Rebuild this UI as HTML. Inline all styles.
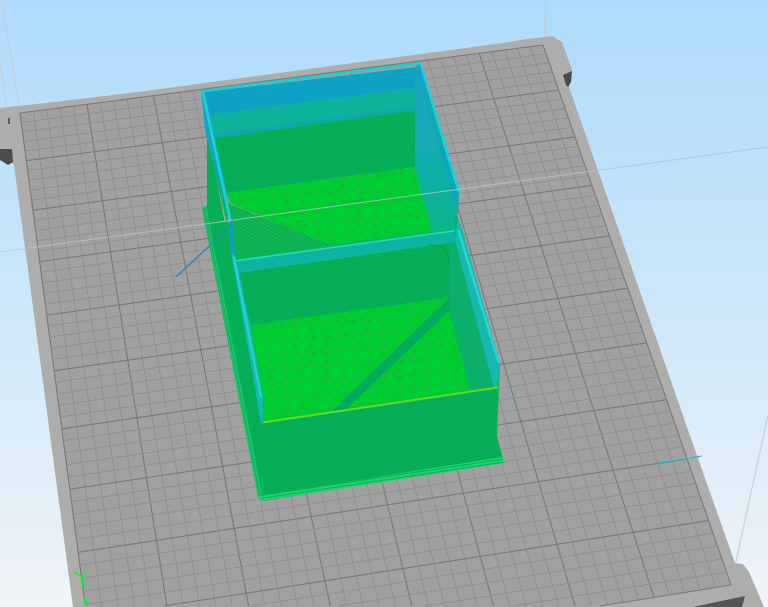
<!DOCTYPE html>
<html>
<head>
<meta charset="utf-8">
<style>
html,body{margin:0;padding:0;background:#c8e4fa;}
body{width:768px;height:607px;overflow:hidden;}
svg{display:block;}
</style>
</head>
<body>
<svg id="s" width="768" height="607" viewBox="0 0 768 607" xmlns="http://www.w3.org/2000/svg">
<defs>
<linearGradient id="bg" x1="0" y1="0" x2="0" y2="1">
<stop offset="0" stop-color="#aedbfc"/>
<stop offset="0.35" stop-color="#c2e3fa"/>
<stop offset="1" stop-color="#f0f4f8"/>
</linearGradient>
<pattern id="floor" width="2" height="2" patternUnits="userSpaceOnUse" patternTransform="rotate(-8)">
<rect width="2" height="2" fill="#02d436"/>
<rect width="1" height="1" fill="#02ad2c"/>
</pattern>
<pattern id="wall" width="2" height="2" patternUnits="userSpaceOnUse" patternTransform="rotate(-8)">
<rect width="2" height="2" fill="#08b45c"/>
<rect width="2" height="1" fill="#04a852"/>
</pattern>
<pattern id="swirl" width="3" height="3" patternUnits="userSpaceOnUse" patternTransform="rotate(30)">
<rect width="3" height="3" fill="#0fba55"/>
<rect width="3" height="1" fill="#07a548"/>
</pattern>
<pattern id="base" width="3" height="3" patternUnits="userSpaceOnUse" patternTransform="rotate(-8.5)">
<rect width="3" height="3" fill="#1bd66c"/>
<rect width="3" height="1" fill="#08ad58"/>
</pattern>
<linearGradient id="rw" x1="0" y1="0" x2="0" y2="1">
<stop offset="0" stop-color="#12a3c6"/>
<stop offset="0.5" stop-color="#12acb2"/>
<stop offset="1" stop-color="#0db488"/>
</linearGradient>
<linearGradient id="lw" x1="0" y1="0" x2="0" y2="1">
<stop offset="0" stop-color="#12a8ca"/>
<stop offset="1" stop-color="#0ba6bc"/>
</linearGradient>
<filter id="soft" x="-5%" y="-5%" width="110%" height="110%"><feGaussianBlur stdDeviation="0.35"/></filter>
</defs>

<rect width="768" height="607" fill="url(#bg)"/>

<!-- bounding lines -->
<g stroke="#c6ccd0" stroke-width="1" fill="none">
<line x1="2" y1="0" x2="19" y2="106"/>
<line x1="0" y1="60" x2="16" y2="170"/>
<line x1="546" y1="0" x2="544" y2="40"/>
<line x1="768" y1="415" x2="733" y2="575"/>
<line x1="600" y1="170" x2="768" y2="147" stroke="#b6c8d2"/>
</g>

<!-- bed -->
<polygon fill="#adadac" points="0,108 45,103 130,93 510,42 520,40 552,36 562,42 572,70 569,87 688,430 735,563 743,564 749,572 764,607 73,607 14,165 0,148"/>
<polygon fill="#4b4b4b" points="0,149 12,149 13,162 8,165 0,160"/>
<polygon fill="#4b4b4b" points="563,75 572,71 571,82 568,87 566,85"/>
<polygon fill="#555555" points="693,607 745,596 742,607"/>
<rect x="8" y="118" width="2" height="6" fill="#5c5c5c"/>
<polygon id="plate" fill="#a1a1a1" points="20,113 543,45 731,585 587,607 86,607"/>
<g id="grid" filter="url(#soft)"></g>

<g filter="url(#soft)">
<!-- model: silhouette and outer faces -->
<polygon fill="#0cb25e" points="202,208 258,497 263,501 500,463 503,458 497,437 500,363 457,215 232,225"/>
<polygon fill="#14c868" points="203,207 208,205 266,495 262,501 258,497"/>
<g stroke="#0aa858" stroke-width="0.8" fill="none">
<line x1="204.5" y1="207" x2="260" y2="497"/>
<line x1="206.5" y1="206" x2="263" y2="497"/>
</g>
<polygon fill="url(#wall)" points="207,130 230,250 262,423 262,495 240,380 207,208"/>

<!-- back box -->
<polygon fill="#0cb25e" points="205,130 233,250 225,200"/>
<polygon fill="url(#lw)" points="201,90 205,92 227,193 237,262 233,250 230,223 205,130"/>
<polygon fill="url(#wall)" points="215,138 415,110 415,167 227,193"/>
<polygon fill="#0eb29a" points="210,115 415,88 415,110 215,138"/>
<polygon fill="#0ea8ae" points="214,134 415,107 415,110 215,138"/>
<polygon fill="#10a2c4" points="205,92 417,67 415,88 210,115"/>
<polygon fill="url(#rw)" points="419,62 459,192 458,213 455,217 455,232 432,232 415,167 415,88 417,67"/>
<polygon fill="#0ba8b8" points="423,90 459,192 458,213 448,180"/>
<polygon fill="url(#floor)" points="227,193 415,167 432,232 328,245 230,203"/>
<polygon fill="url(#swirl)" points="228,203 330,245 237,262"/>
<polygon fill="#1fcfd0" points="201,90 419,62 420,64.5 202,92.5"/>
<polygon fill="#1fd2d4" points="201,90 204,91 232,222 229.5,222"/>
<polygon fill="#1fd2d4" points="419,62 421.5,62.5 460,191 457.5,192"/>
<polygon fill="#0e9ec4" points="229,222 233,220 234,250 231,258"/>

<!-- front box interior -->
<polygon fill="url(#wall)" points="237,262 450,240 450,297 250,325"/>
<polygon fill="#0ab06a" points="450,245 460,235 498,387 470,390 450,312"/>
<polygon fill="url(#floor)" points="250,325 448,298 450,312 470,390 333,412 265,422"/>
<polygon fill="#06aa5c" points="450,297 450,310 343,412 330,413"/>
<polygon fill="#10b4a2" points="235,260 455,230 455,242 238,273"/>
<polygon fill="#26dcb4" points="235,260 455,230 455,231.5 236,261.5"/>
<path d="M426 245 Q448 243 449 262" stroke="#049a50" stroke-width="0.7" fill="none"/>
<polygon fill="#12b8b4" points="231,250 236,258 250,325 263,397 263,422 261,423"/>
<polygon fill="#26d4d8" points="232,254 235,258 262,397 260,397"/>
<polygon fill="#14b8b0" points="458,218 463,232 500,363 497,388 494,388 455,240"/>
<polygon fill="#26d6d0" points="457,230 460,230 500,363 497.5,363"/>

<!-- front wall -->
<polygon fill="url(#wall)" points="262,423 498,388 497,437 502,460 263,495"/>
<polygon fill="#62de14" points="263,421.5 498,386.5 498,388.5 263,423.5"/>
<polygon fill="url(#base)" points="258,496 502,457 505,463 263,501"/>
</g>

<!-- thin lines over model -->
<line x1="0" y1="252" x2="600" y2="170" stroke="#bcc8c4" stroke-width="1" opacity=".75"/>
<line x1="176" y1="277" x2="232" y2="225" stroke="#2786c4" stroke-width="1.4"/>
<line x1="658" y1="464" x2="702" y2="456" stroke="#16b9d0" stroke-width="1.4" stroke-dasharray="3 1"/>

<!-- axes -->
<g stroke="#0af03c" fill="none">
<line x1="82" y1="577" x2="84" y2="587" stroke-width="2.4"/>
<line x1="85" y1="598" x2="86" y2="606" stroke-width="2.4"/>
<line x1="74" y1="572" x2="82" y2="577" stroke-width="1.6"/>
<line x1="88" y1="570" x2="82" y2="577" stroke-width="1.2"/>
</g>
</svg>

<script>
(function(){
  // projective map from unit square onto the plate corners
  var x0=20,y0=113,x1=543,y1=45,x2=731,y2=585,x3=96,y3=687;
  var dx1=x1-x2,dx2=x3-x2,dx3=x0-x1+x2-x3,dy1=y1-y2,dy2=y3-y2,dy3=y0-y1+y2-y3;
  var den=dx1*dy2-dx2*dy1;
  var g=(dx3*dy2-dx2*dy3)/den,h=(dx1*dy3-dx3*dy1)/den;
  var a=x1-x0+g*x1,b=x3-x0+h*x3,c=x0,d=y1-y0+g*y1,e=y3-y0+h*y3,f=y0;
  function P(u,v){var w=g*u+h*v+1;return [(a*u+b*v+c)/w,(d*u+e*v+f)/w];}
  var out=document.getElementById('grid'),NS='http://www.w3.org/2000/svg',Y=606;
  function L(p,q,maj){
    if(p[1]>Y&&q[1]>Y)return;
    if(p[1]>Y||q[1]>Y){
      var t=(Y-p[1])/(q[1]-p[1]),r=[p[0]+t*(q[0]-p[0]),Y];
      if(p[1]>Y)p=r;else q=r;
    }
    var l=document.createElementNS(NS,'line');
    l.setAttribute('x1',p[0]);l.setAttribute('y1',p[1]);
    l.setAttribute('x2',q[0]);l.setAttribute('y2',q[1]);
    l.setAttribute('stroke',maj?'#787878':'#8e8e8e');
    l.setAttribute('stroke-width',maj?'1.1':'0.9');
    out.appendChild(l);
  }
  var i;
  for(i=0;i<=40;i++){L(P(i/40,0),P(i/40,1),i%5==0);}
  for(i=0;i<=50;i++){L(P(0,i/50),P(1,i/50),i%5==0);}
})();
</script>
</body>
</html>
